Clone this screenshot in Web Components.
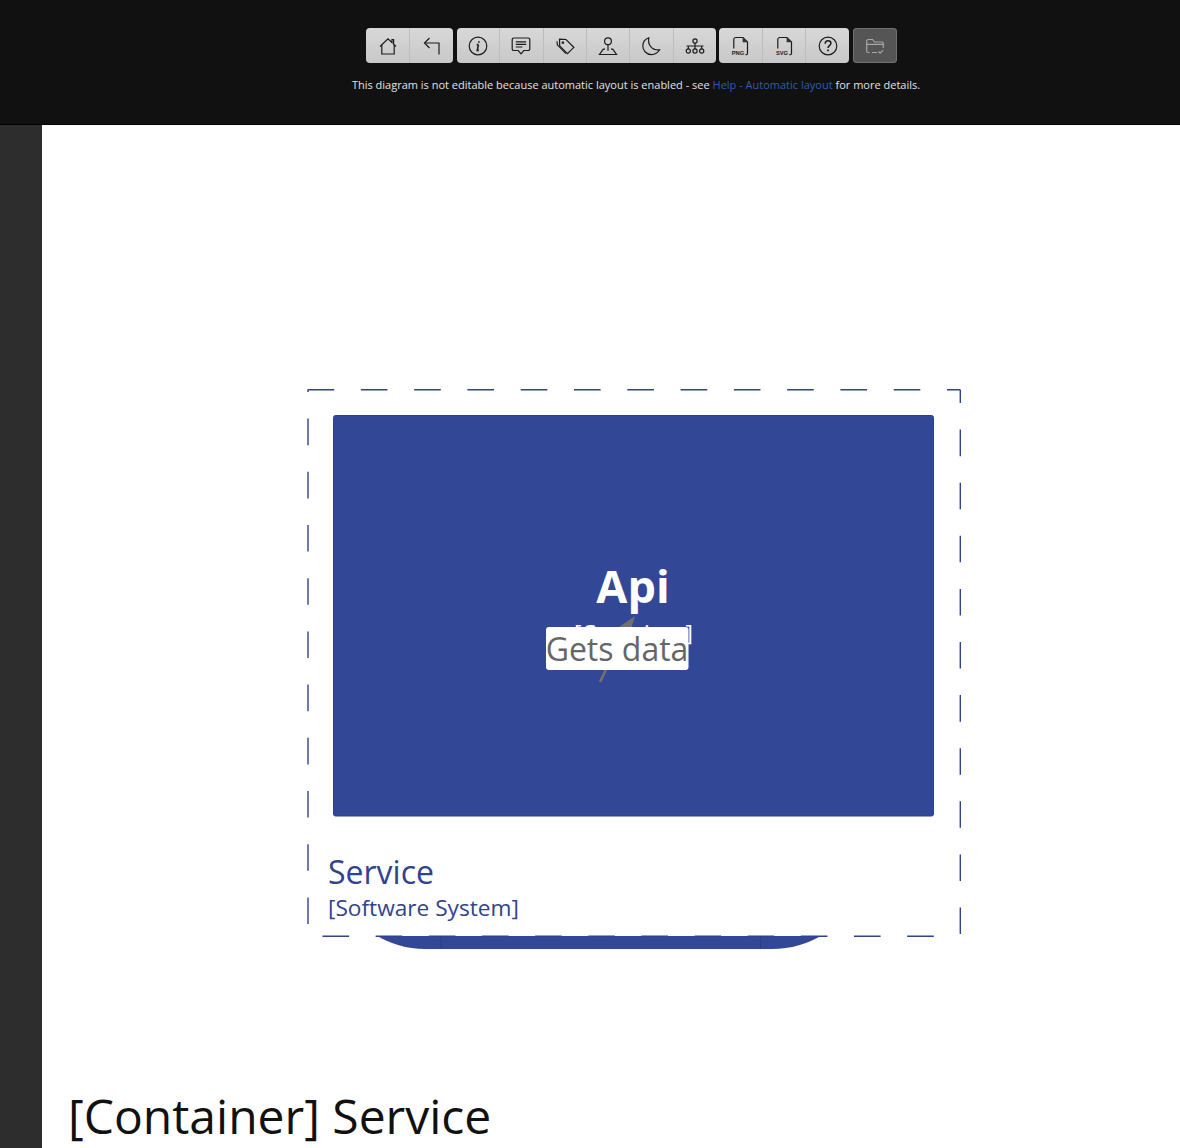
<!DOCTYPE html>
<html>
<head>
<meta charset="utf-8">
<title>Service</title>
<style>
html, body { margin: 0; padding: 0; background: #fff; overflow: hidden; height: 1148px; font-family: "Open Sans", sans-serif; }
</style>
</head>
<body>

<diagram-page>
  <top-bar slot="top">
    <tool-group size="87">
      <tool-button icon="home"></tool-button>
      <tool-button icon="undo"></tool-button>
    </tool-group>
    <tool-group size="259">
      <tool-button icon="info"></tool-button>
      <tool-button icon="comment"></tool-button>
      <tool-button icon="tag"></tool-button>
      <tool-button icon="person"></tool-button>
      <tool-button icon="moon"></tool-button>
      <tool-button icon="tree"></tool-button>
    </tool-group>
    <tool-group size="130" tight>
      <tool-button icon="png"></tool-button>
      <tool-button icon="svg"></tool-button>
      <tool-button icon="help"></tool-button>
    </tool-group>
    <tool-group size="44" dark>
      <tool-button icon="folder" dark></tool-button>
    </tool-group>
    <span slot="message">This diagram is not editable because automatic layout is enabled - see <a style="color:#2f5bb5;text-decoration:none" href="#">Help - Automatic layout</a> for more details.</span>
  </top-bar>
  <c4-canvas slot="canvas"></c4-canvas>
  <span slot="title">[Container] Service</span>
</diagram-page>

<script>
const ICONS = {
  home: '<path d="M2 10.500 10 2.800l4 3.900V3.500h1.600v4.700L18 10.500"/><path d="M3.800 9v9h12.400V9"/>',
  undo: '<path d="M7.500 2 2.500 7 7.500 12"/><path d="M2.500 7h14.500v11.500"/>',
  info: '<circle cx="10" cy="10" r="8.800"/><path d="M10.900 5.300v1.500M10.400 8.600 9.300 14.400h1.500M8.700 8.600h1.700" stroke-width="1.600"/>',
  comment: '<path d="M2.800 2h14.400a1.600 1.600 0 0 1 1.600 1.600v9.300a1.600 1.600 0 0 1-1.600 1.600h-4.400L10 17.800l-2.800-3.300H2.800a1.600 1.600 0 0 1-1.600-1.600V3.600A1.600 1.600 0 0 1 2.800 2z"/><path d="M4.800 5.800h10.400M4.800 8.400h10.400M4.800 11h6.600"/>',
  tag: '<path d="M4.500 3.200 11 3.500 18.800 11.300 12.500 17.600 4.700 9.800z"/><path d="M2 5.200 2.300 8.800 11 17.600"/><path d="M7.300 6h1.200v1.200H7.300z"/>',
  person: '<circle cx="10" cy="5.200" r="3.400"/><path d="M10 8.600v6.200"/><path d="M7 13.200H5.300L1.500 18.500h17l-3.800-5.300H13"/>',
  moon: '<path d="M7.800 1.800c-1.400 6.300 3 13 10.800 12-1.700 3-4.900 4.800-8.200 4.800C5.500 18.600 1.800 14.600 1.800 10c0-3.600 2.300-6.900 6-8.200z"/>',
  tree: '<circle cx="10" cy="5" r="2.100"/><circle cx="3.300" cy="15" r="2.100"/><circle cx="10" cy="15" r="2.100"/><circle cx="16.700" cy="15" r="2.100"/><path d="M10 7.100v5.800M3.300 12.900V10h13.400v2.900M1.500 10h17"/>',
  png: '<path d="M3.800 12.500V3.500a2 2 0 0 1 2-2h7.200l4.500 4.500v11.500a1.200 1.200 0 0 1-1.200 1.200h-.8"/><path d="M12.600 1.500V6.300h4.900z" fill="#333" stroke="none"/><text x="8" y="19.200" text-anchor="middle" font-family="Liberation Sans" font-weight="700" font-size="5.800" fill="#222" stroke="none">PNG</text>',
  svg: '<path d="M3.800 12.500V3.500a2 2 0 0 1 2-2h7.200l4.500 4.500v11.500a1.200 1.200 0 0 1-1.200 1.200h-.8"/><path d="M12.600 1.500V6.300h4.900z" fill="#333" stroke="none"/><text x="8" y="19.200" text-anchor="middle" font-family="Liberation Sans" font-weight="700" font-size="5.800" fill="#222" stroke="none">SVG</text>',
  help: '<circle cx="10" cy="10" r="8.800"/><path d="M7.200 7.800c0-1.800 1.200-3 2.900-3s2.800 1.100 2.800 2.500c0 2.400-2.900 2.300-2.900 4.800" stroke-width="1.500"/><path d="M10 13.500v1.700" stroke-width="1.700"/>',
  folder: '<path d="M4.500 16.500H3.200A1.500 1.500 0 0 1 1.700 15V5a1.500 1.500 0 0 1 1.500-1.500h4.300L9.500 6h7.300a1.500 1.500 0 0 1 1.500 1.500V12"/><path d="M1.700 8.300h16.600"/><path d="M7 16.500h5"/><path d="M13.500 15.500l1.600 1.600 3-3"/>'
};

const pageTpl = document.createElement('template');
pageTpl.innerHTML = `
<style>
:host { display: flex; flex-direction: column; width: 1180px; height: 1148px; overflow: hidden; }
.body { display: flex; flex: 1; min-height: 0; }
.side { width: 42px; background: #2d2d2d; flex: none; }
.main { flex: 1; min-width: 0; background: #fff; }
.title { padding: 0 0 0 26px; margin-top: 16px; font-size: 48px; line-height: 65px; color: #111; font-family: "Open Sans", sans-serif; white-space: nowrap; }
</style>
<slot name="top"></slot>
<div class="body">
  <div class="side"></div>
  <div class="main">
    <slot name="canvas"></slot>
    <div class="title"><slot name="title"></slot></div>
  </div>
</div>`;
class DiagramPage extends HTMLElement {
  constructor() {
    super();
    this.attachShadow({ mode: 'open' }).appendChild(pageTpl.content.cloneNode(true));
  }
}
customElements.define('diagram-page', DiagramPage);

const barTpl = document.createElement('template');
barTpl.innerHTML = `
<style>
:host { display: flex; flex-direction: column; align-items: center; height: 124px; box-sizing: content-box; background: #111; border-bottom: 1px solid #000; padding-left: 83px; flex: none; }
.tools { display: flex; margin-top: 28px; }
.msg { margin-top: 13px; margin-left: 9px; font-size: 11px; line-height: 18px; color: #e2e2e2; white-space: nowrap; font-family: "Open Sans", sans-serif; }
</style>
<div class="tools"><slot></slot></div>
<div class="msg"><slot name="message"></slot></div>`;
class TopBar extends HTMLElement {
  constructor() {
    super();
    this.attachShadow({ mode: 'open' }).appendChild(barTpl.content.cloneNode(true));
  }
}
customElements.define('top-bar', TopBar);

const groupTpl = document.createElement('template');
groupTpl.innerHTML = `
<style>
:host { display: flex; height: 35px; margin-left: 4px; border-radius: 4px; overflow: hidden; background: linear-gradient(#d8d8d8, #c8c8c8); }
:host(:first-child) { margin-left: 0; }
:host([tight]) { margin-left: 3px; }
:host([dark]) { background: #555; box-shadow: inset 0 0 0 1px #717171; }
</style>
<slot></slot>`;
class ToolGroup extends HTMLElement {
  constructor() {
    super();
    this.attachShadow({ mode: 'open' }).appendChild(groupTpl.content.cloneNode(true));
    this.style.width = this.getAttribute('size') + 'px';
  }
}
customElements.define('tool-group', ToolGroup);

class ToolButton extends HTMLElement {
  constructor() {
    super();
    this.attachShadow({ mode: 'open' });
  }
  connectedCallback() {
    const dark = this.hasAttribute('dark');
    this.shadowRoot.innerHTML = `
<style>
:host { display: flex; flex: 1; height: 35px; align-items: center; justify-content: center; box-sizing: border-box; border-left: 1px solid #bdbdbd; }
:host(:first-child) { border-left: 0; }
svg { display: block; width: 20px; height: 20px; fill: none; stroke: ${dark ? '#a8a8a8' : '#1c1c1c'}; stroke-width: 1.2; }
</style>
<svg viewBox="0 0 20 20">${ICONS[this.getAttribute('icon')]}</svg>`;
  }
}
customElements.define('tool-button', ToolButton);

const canvasTpl = document.createElement('template');
canvasTpl.innerHTML = `
<style>
:host { display: block; height: 942px; }
svg { display: block; width: 1138px; height: 942px; }
text { font-family: "Open Sans", sans-serif; }
.edge { fill: none; stroke: #2f4390; stroke-width: 1.4; }
</style>
<svg viewBox="42 125 1138 942">
  <path d="M374 934 Q398 949 425 949 H772 Q800 949 824 934z" fill="#324897"/>
  <path d="M441 936v13M760.500 936v13" stroke="#2a3e85" stroke-width="1"/>
  <rect x="308" y="390" width="652" height="546" fill="#fff"/>
  <path class="edge" d="M307.600 389.700H960.300" stroke-dasharray="26.640 26.640"/>
  <path class="edge" d="M960.300 389.700V936" stroke-dasharray="26.550 26.550" stroke-dashoffset="13.200"/>
  <path class="edge" d="M960.300 936.200H308" stroke-dasharray="26.600 26.550" stroke-dashoffset="26.600"/>
  <path class="edge" d="M308 936.200V389.700" stroke-dasharray="26.600 26.600" stroke-dashoffset="41"/>
  <rect x="333.500" y="415.500" width="600" height="400.500" rx="2" fill="#324897" stroke="#2c4089"/>
  <text x="633" y="602.500" text-anchor="middle" font-size="45" font-weight="700" fill="#fff">Api</text>
  <text x="633.500" y="641" text-anchor="middle" font-size="22.670" fill="#fff">[Container]</text>
  <path d="M600 682 621 638" stroke="#707070" stroke-width="2.700" fill="none"/>
  <path d="M635 616 606 636 625 648z" fill="#707070"/>
  <rect x="546" y="627" width="142.500" height="43" rx="3" fill="#fff"/>
  <text x="617" y="661" text-anchor="middle" font-size="32" fill="#666">Gets data</text>
  <text x="328" y="884" font-size="32" fill="#2f4390">Service</text>
  <text x="328" y="916" font-size="22.670" fill="#2f4390">[Software System]</text>
</svg>`;
class C4Canvas extends HTMLElement {
  constructor() {
    super();
    this.attachShadow({ mode: 'open' }).appendChild(canvasTpl.content.cloneNode(true));
  }
}
customElements.define('c4-canvas', C4Canvas);
</script>
</body>
</html>
